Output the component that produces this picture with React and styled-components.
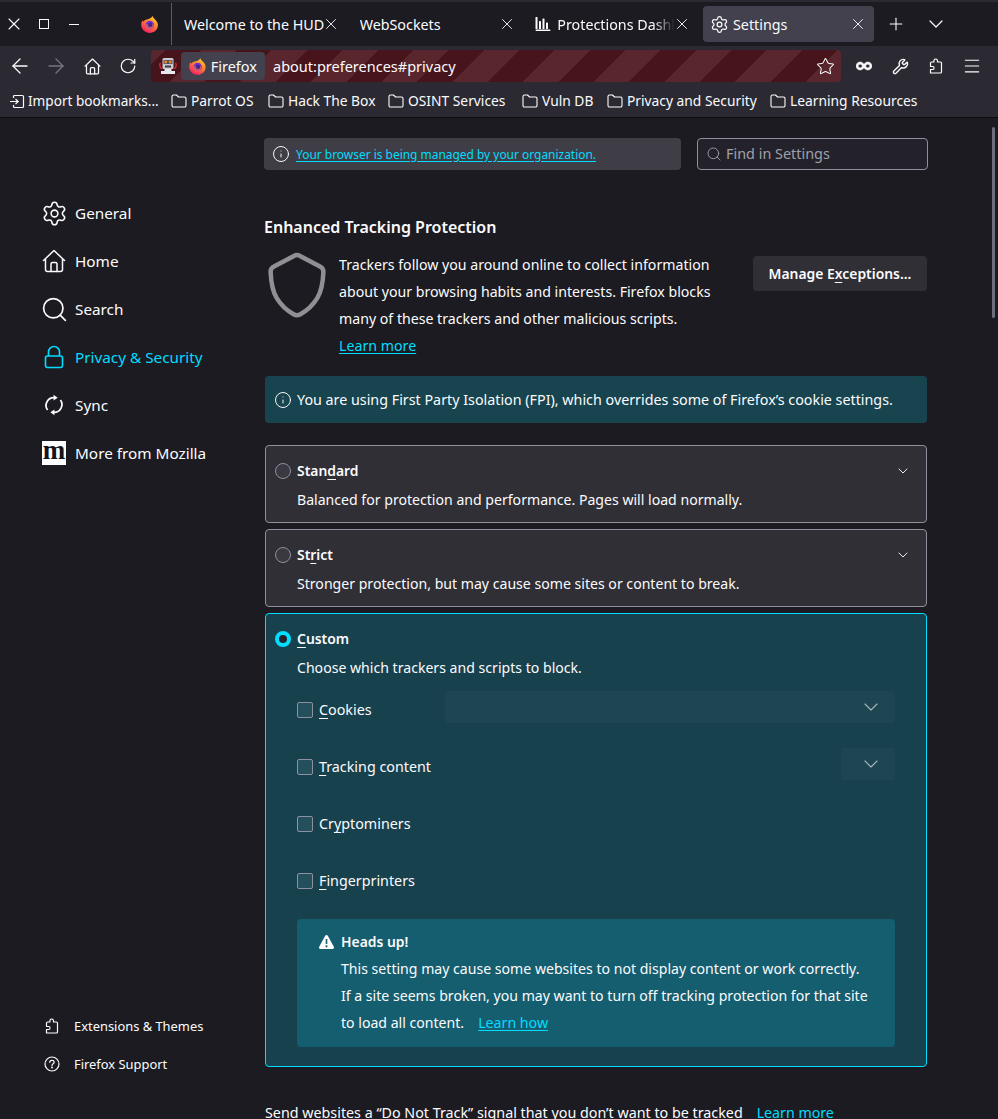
import React from 'react';
import styled, { createGlobalStyle } from 'styled-components';
import { X, Plus, ChevronDown, Star, Wrench, Menu, ArrowLeft, ArrowRight, RotateCw, Search as SearchIcon, Info, Settings } from 'lucide-react';

const colors = {
    frame: '#1c1b22',
    toolbar: '#2b2a33',
    card: '#302f36',
    active: '#42414d',
    text: '#fbfbfe',
    accent: '#00ddff',
    border: '#8f8f9d',
    custom: '#18414e',
    customField: '#1e4652',
    notice: '#155e6f',
};

const GlobalStyle = createGlobalStyle`
    html, body {
        margin: 0;
        background: ${colors.frame};
        overflow: hidden;
    }

    * {
        box-sizing: border-box;
    }

    body {
        font-family: 'Noto Sans', sans-serif;
        font-size: 14.3px;
        color: ${colors.text};
    }
`;

const Window = styled.div`
    display: flex;
    flex-direction: column;
    height: 1119px;
    overflow: hidden;
    position: relative;
`;

const TabBar = styled.div`
    align-items: center;
    background: ${colors.frame};
    border-top: 2px solid #2b2a33;
    display: flex;
    flex: 0 0 46px;
`;

const WindowButtons = styled.div`
    align-items: center;
    display: flex;
    flex: 0 0 140px;
    gap: 10px;
    padding-left: 4px;
    svg {
        display: block;
    }
`;

const PinnedTab = styled.div`
    align-items: center;
    border-right: 1px solid #5b5b66;
    display: flex;
    flex: 0 0 32px;
    height: 42px;
    padding-left: 1px;
`;

const TabStrip = styled.div`
    display: flex;
    gap: 4.67px;
    margin-left: 4px;
`;

const Tab = styled.div`
    align-items: center;
    background: ${p => (p.$active ? colors.active : 'transparent')};
    border-radius: 4px;
    display: flex;
    font-size: 14.3px;
    gap: 6px;
    height: 36px;
    padding: 0 7px 0 8px;
    width: 171px;
`;

const TabTitle = styled.span`
    flex: 1;
    mask-image: ${p => (p.$fade ? 'linear-gradient(to right, #000 80%, transparent 98%)' : 'none')};
    min-width: 0;
    overflow: hidden;
    white-space: nowrap;
`;

const TabClose = styled(X).attrs({ size: 18, strokeWidth: 1.2 })`
    flex: none;
    margin-left: -10px;
`;

const TabGear = styled(Settings).attrs({ size: 19, strokeWidth: 1.6 })`
    flex: none;
    margin: 0 -2px 0 -1px;
`;

const TabActions = styled.div`
    align-items: center;
    color: ${colors.text};
    display: flex;
    gap: 18px;
    margin-left: 12px;
    svg {
        display: block;
    }
`;

const NavBar = styled.div`
    align-items: center;
    background: ${colors.toolbar};
    display: flex;
    flex: 0 0 40px;
    padding: 0 16px 0 11px;
`;

const ToolButton = styled.div`
    align-items: center;
    color: ${p => (p.$disabled ? '#77767f' : colors.text)};
    display: flex;
    flex: 0 0 18px;
    justify-content: center;
    margin-right: ${p => p.$gap ?? 18}px;
    min-width: 0;
    svg {
        display: block;
        flex: none;
    }
`;

const UrlBar = styled.div`
    align-items: center;
    background: repeating-linear-gradient(-45deg, #58262c 0, #58262c 25px, #47141c 25px, #47141c 50px);
    border-radius: 4px;
    display: flex;
    flex: 0 0 690px;
    font-size: 14.5px;
    height: 32px;
    margin: 0 14px;
    padding: 0 6px 0 7px;
`;

const IdentityChip = styled.div`
    align-items: center;
    background: ${colors.active};
    border-radius: 4px;
    display: flex;
    gap: 5px;
    height: 28px;
    margin: 0 8px 0 3px;
    padding: 0 8px;
    width: 84px;
`;

const UrlText = styled.span`
    flex: 1;
    white-space: nowrap;
`;

const BookmarksBar = styled.div`
    align-items: center;
    background: ${colors.toolbar};
    border-bottom: 1px solid #0c0c0d;
    display: flex;
    flex: 0 0 32px;
    font-size: 13.8px;
    padding: 0 0 2px 9px;
`;

const Bookmark = styled.div`
    align-items: center;
    display: flex;
    flex: 0 0 ${p => p.$width}px;
    font-size: ${p => p.$size ?? 13.8}px;
    gap: ${p => p.$gap ?? 4}px;
    white-space: nowrap;
    svg {
        display: block;
        flex: none;
    }
`;

const Body = styled.div`
    display: flex;
    flex: 1;
    min-height: 0;
`;

const Sidebar = styled.nav`
    display: flex;
    flex: 0 0 264px;
    flex-direction: column;
    justify-content: space-between;
    padding: 71px 0 36px 42px;
`;

const NavItem = styled.div`
    align-items: center;
    color: ${p => (p.$active ? colors.accent : colors.text)};
    display: flex;
    font-size: 15.3px;
    gap: 9px;
    height: 48px;
`;

const NavIcon = styled.span`
    align-items: center;
    display: flex;
    flex: 0 0 24px;
    justify-content: center;
    min-width: 0;
    svg {
        display: block;
        flex: none;
    }
`;

const NavLabel = styled.span`
    padding-bottom: 1px;
`;

const FooterItem = styled.div`
    align-items: center;
    display: flex;
    font-size: 12.9px;
    gap: 14px;
    height: 38px;
    padding-left: 2px;
    svg {
        display: block;
        flex: none;
    }
`;

const MozillaMark = styled.span`
    align-items: center;
    background: #fff;
    color: #15141a;
    display: flex;
    flex: none;
    font-family: 'Liberation Serif', serif;
    font-size: 27px;
    font-weight: 700;
    height: 24px;
    justify-content: center;
    line-height: 1;
    padding-bottom: 6px;
    width: 24px;
`;

const Main = styled.main`
    flex: 0 0 664px;
    padding-top: 20px;
`;

const TopRow = styled.div`
    display: flex;
    gap: 16px;
    height: 32px;
`;

const ManagedBar = styled.div`
    align-items: center;
    background: #3f3e46;
    border-radius: 4px;
    display: flex;
    flex: 0 0 417px;
    gap: 6px;
    padding-left: 8px;
    svg {
        display: block;
    }
`;

const TextLink = styled.a`
    color: ${colors.accent};
    font-size: ${p => p.$size ?? 14.2}px;
    text-decoration: underline;
    text-underline-offset: 2px;
`;

const SearchBox = styled.div`
    align-items: center;
    background: #23222b;
    border: 1px solid ${colors.border};
    border-radius: 4px;
    color: #a0a0a9;
    display: flex;
    flex: 1;
    font-size: 14.4px;
    gap: 4px;
    padding: 0 0 1px 8px;
    svg {
        display: block;
    }
`;

const Heading = styled.h2`
    font-size: 16px;
    font-weight: 600;
    line-height: 24px;
    margin: 45px 0 0;
`;

const IntroRow = styled.div`
    display: flex;
    margin-top: 12px;
    padding-right: 1px;
`;

const ShieldSlot = styled.div`
    flex: 0 0 75px;
    padding: 1px 0 0 3px;
`;

const IntroText = styled.p`
    flex: 0 0 400px;
    font-size: 14.15px;
    line-height: 27px;
    margin: 0;
`;

const PlainButton = styled.div`
    align-items: center;
    background: ${colors.card};
    border-radius: 4px;
    display: flex;
    font-size: 13.9px;
    font-weight: 600;
    height: 35px;
    justify-content: center;
    margin: 5px 0 0 auto;
    width: 174px;
`;

const Notice = styled.div`
    align-items: center;
    background: #17444f;
    border-radius: 4px;
    display: flex;
    gap: 5px;
    height: 47px;
    margin: 17px 1px 0;
    padding-left: 9px;
    svg {
        display: block;
    }
`;

const Cards = styled.div`
    display: flex;
    flex-direction: column;
    gap: 6px;
    margin: 22px 1px 0;
`;

const Card = styled.section`
    background: ${p => (p.$selected ? colors.custom : colors.card)};
    border: 1px solid ${p => (p.$selected ? colors.accent : colors.border)};
    border-radius: 4px;
    height: ${p => (p.$selected ? '454px' : '78px')};
    padding: 11px 31px 0 9px;
`;

const CardHead = styled.div`
    align-items: center;
    display: flex;
    font-size: 13.9px;
    font-weight: 600;
    gap: 6px;
    height: 27px;
    svg {
        display: block;
        margin-left: auto;
        margin-right: -16px;
    }
`;

const CardTitle = styled.span`
    padding-bottom: 1px;
`;

const Radio = styled.span`
    background: ${p => (p.$checked ? '#23222b' : '#3a3942')};
    border: ${p => (p.$checked ? `4px solid ${colors.accent}` : `1px solid ${colors.border}`)};
    border-radius: 50%;
    flex: none;
    height: 16px;
    width: 16px;
`;

const CardText = styled.p`
    font-size: 14.1px;
    line-height: 27px;
    margin: 2px 0 0 22px;
`;

const Key = styled.u`
    text-decoration-thickness: 1px;
    text-underline-offset: 3px;
`;

const OptionRow = styled.div`
    align-items: center;
    display: flex;
    height: 57px;
    margin-left: 22px;
`;

const CheckBox = styled.span`
    background: #23505c;
    border: 1px solid ${colors.border};
    border-radius: 2px;
    flex: none;
    height: 16px;
    margin-right: 6px;
    width: 16px;
`;

const OptionLabel = styled.span`
    flex: 0 0 126px;
`;

const SelectBox = styled.div`
    align-items: center;
    background: ${colors.customField};
    border-radius: 4px;
    color: #a9b8be;
    display: flex;
    height: 32px;
    justify-content: flex-end;
    margin-left: ${p => (p.$small ? 'auto' : 0)};
    margin-top: -6px;
    padding-right: 12px;
    width: ${p => (p.$small ? '54px' : '450px')};
`;

const Warning = styled.div`
    background: ${colors.notice};
    border-radius: 4px;
    height: 128px;
    margin: 10px 0 0 22px;
    padding: 9px 22px 0 22px;
`;

const WarningTitle = styled.div`
    align-items: center;
    display: flex;
    font-size: 13.9px;
    font-weight: 600;
    gap: 7px;
    height: 27px;
    svg {
        display: block;
    }
`;

const WarningText = styled.p`
    font-size: 14.1px;
    line-height: 27px;
    margin: 0 0 0 22px;
`;

const LinkGap = styled.span`
    margin-left: 14px;
`;

const DntLine = styled.p`
    margin: 36px 0 0 1px;
    white-space: nowrap;
`;

const OverlayScrollbar = styled.div`
    background: #6b6e7c;
    border-radius: 2px;
    height: 191px;
    position: absolute;
    right: 3px;
    top: 127px;
    width: 3px;
`;

const FirefoxLogo = () => (
    <svg width="17" height="17" viewBox="0 0 16 16">
        <defs>
            <linearGradient id="fx" x1="0.8" y1="0" x2="0.25" y2="1">
                <stop offset="0" stopColor="#ffd22e" />
                <stop offset="0.4" stopColor="#ff8a2e" />
                <stop offset="1" stopColor="#f5156c" />
            </linearGradient>
        </defs>
        <path d="M11 0c.3 1.700 1.400 2.300 2.500 3.500 1.700 1.700 2.500 3.500 2.400 5.500-.2 4-3.500 7-7.700 7C3.800 16 .2 12.500.2 8.300c0-1.700.5-3.200 1.400-4.400l.5 1.500c1-1.500 2.600-2.300 4.500-2.400C8.100 2.500 9.800 1.700 11 0z" fill="url(#fx)" />
        <circle cx="8.300" cy="8.500" r="4.100" fill="#7b2fd0" />
        <path d="M4.200 7.600c1.700.3 3.100.1 4.400-1 1 1.200 3 .6 3.600 2-.3 2.500-2 4.300-4.300 4.300-2 0-3.500-1.200-3.900-3.100z" fill="#ff7139" opacity="0.6" />
        <circle cx="8.600" cy="8.200" r="2.100" fill="#45278d" />
    </svg>
);

const RobotIcon = () => (
    <svg width="20" height="20" viewBox="0 0 20 20" fill="none">
        <path d="M2.500 7c-1.500 2-.5 5 1.500 6M17.500 7c1.500 2 .5 5-1.500 6" stroke="#d92d35" strokeWidth="1.300" />
        <rect x="4.500" y="2" width="11" height="11" rx="1.500" fill="#c9c9cf" />
        <rect x="5.500" y="4" width="9" height="4" fill="#55545c" />
        <circle cx="7.700" cy="6" r="1.400" fill="#f08a24" />
        <circle cx="12.300" cy="6" r="1.400" fill="#f08a24" />
        <rect x="7" y="9.500" width="6" height="2" fill="#3a3942" />
        <path d="M6.500 13h7v2h3.500v3H3v-3h3.500z" fill="#e8e8ee" />
    </svg>
);

const HomeIcon = ({ size = 17, sw = 1.8 }) => (
    <svg width={size} height={size} viewBox="0 0 24 24" fill="none" stroke="currentColor" strokeWidth={sw} strokeLinejoin="round" strokeLinecap="round">
        <path d="M1.500 11.500 12 1.500l10.500 10M3.500 10v11a2 2 0 0 0 2 1.500h13a2 2 0 0 0 2-1.500V10" />
        <path d="M9 22.500V15a1.500 1.500 0 0 1 1.500-1.500h3A1.500 1.500 0 0 1 15 15v7.500" />
    </svg>
);

const LockIcon = () => (
    <svg width="24" height="24" viewBox="0 0 24 24" fill="none" stroke="currentColor" strokeWidth="1.600">
        <rect x="3.500" y="11" width="17" height="11.500" rx="2" />
        <path d="M6.500 11V7a5.500 5.500 0 0 1 11 0v4" />
    </svg>
);

const SyncIcon = () => (
    <svg width="22" height="22" viewBox="0 0 24 24" fill="none" stroke="currentColor" strokeWidth="1.900">
        <path d="M5 17.500A8.500 8.500 0 0 1 12.500 4" />
        <path d="M19 6.500A8.500 8.500 0 0 1 11.500 20" />
        <path d="M11.500.8 16 4l-4.500 3.200z" fill="currentColor" stroke="none" />
        <path d="M12.500 23.200 8 20l4.500-3.200z" fill="currentColor" stroke="none" />
    </svg>
);

const PuzzleIcon = ({ size = 16 }) => (
    <svg width={size} height={size} viewBox="0 0 16 16" fill="none" stroke="currentColor" strokeWidth="1.200" strokeLinejoin="round">
        <path d="M6 4C5.500 2.500 6.200 1 7.700 1s2.200 1.500 1.700 3h3.100a1 1 0 0 1 1 1v9a1 1 0 0 1-1 1h-10v-3.500H5c1.300 0 1.300-3 0-3H2.500V5a1 1 0 0 1 1-1z" />
    </svg>
);

const FolderIcon = () => (
    <svg width="16" height="16" viewBox="0 0 16 16" fill="none" stroke="currentColor" strokeWidth="1.100" strokeLinejoin="round">
        <path d="M1 3.500A1.500 1.500 0 0 1 2.500 2h3l2 2h6A1.500 1.500 0 0 1 15 5.500v7a1.500 1.500 0 0 1-1.500 1.500h-11A1.500 1.500 0 0 1 1 12.500z" />
    </svg>
);

const ImportIcon = () => (
    <svg width="16" height="16" viewBox="0 0 16 16" fill="none" stroke="currentColor" strokeWidth="1.200">
        <path d="M1 8.500h8M6.500 6l2.700 2.500-2.700 2.500" />
        <path d="M4.500 5V3.500a1 1 0 0 1 1-1h8a1 1 0 0 1 1 1v10a1 1 0 0 1-1 1h-8a1 1 0 0 1-1-1V12" />
    </svg>
);

const ChartGlyph = styled.svg`
    flex: none;
`;

const ChartIcon = () => (
    <ChartGlyph width="16" height="16" viewBox="0 0 16 16" fill="currentColor">
        <rect x=".5" y="1" width="2" height="12" rx=".5" />
        <rect x="4" y="5" width="2" height="8" rx=".5" />
        <rect x="7.500" y="2.500" width="2" height="10.500" rx=".5" />
        <rect x="11" y="6.500" width="2" height="6.500" rx=".5" />
        <rect x=".5" y="13.500" width="15" height="1.500" rx=".7" />
    </ChartGlyph>
);

const MaskIcon = () => (
    <svg width="16" height="16" viewBox="0 0 16 16">
        <path fillRule="evenodd" stroke="#fbfbfe" strokeWidth=".5" d="M4.200 4C1.800 4 0 5.800 0 8s1.800 4 4.200 4c1.900 0 3-1.200 3.800-2.200.8 1 1.900 2.200 3.800 2.200C14.200 12 16 10.200 16 8s-1.800-4-4.200-4C9.900 4 8.800 5.200 8 6.200 7.200 5.200 6.100 4 4.200 4zm0 2.200c1 0 1.700.9 2.300 1.800-.6.900-1.300 1.800-2.300 1.800C3.100 9.800 2.200 9 2.200 8s.9-1.800 2-1.800zm7.600 0c1.100 0 2 .8 2 1.800s-.9 1.800-2 1.800c-1 0-1.700-.9-2.300-1.800.6-.9 1.300-1.800 2.300-1.800z" fill="#fbfbfe" />
    </svg>
);

const ShieldIcon = () => (
    <svg width="60" height="66" viewBox="0 0 60 66" fill="none" stroke="#8f8f94" strokeWidth="4.500" strokeLinejoin="round">
        <path d="M30 3c1 0 2 .3 3 .9l20 10.600c2 1 3.500 3 3.400 5.400-.4 9.400-1.200 18-6 26-4 6.600-10 12.500-17 16.400-2.200 1.200-4.600 1.200-6.800 0-7-3.900-13-9.800-17-16.400-4.800-8-5.600-16.600-6-26C3.500 17.500 5 15.500 7 14.500L27 3.900c1-.6 2-.9 3-.9z" />
    </svg>
);

const WarningIcon = () => (
    <svg width="15" height="14" viewBox="0 0 15 14">
        <path fillRule="evenodd" d="M7.500 0c.5 0 1 .3 1.300.8l6 11c.5 1-.2 2.200-1.300 2.200h-12c-1.100 0-1.800-1.200-1.300-2.200l6-11C6.500.3 7 0 7.500 0zM6.700 4v5h1.600V4zm.8 6.200a1.100 1.100 0 1 0 0 2.200 1.100 1.100 0 0 0 0-2.200z" fill="#fff" />
    </svg>
);

const HelpIcon = () => (
    <svg width="16" height="16" viewBox="0 0 16 16" fill="none" stroke="currentColor" strokeWidth="1.200" strokeLinecap="round">
        <circle cx="8" cy="8" r="7" />
        <path d="M5.800 6.300c0-1.300 1-2 2.200-2s2.200.8 2.200 1.900c0 1.600-2.200 1.600-2.200 3.200" />
        <circle cx="8" cy="11.600" r=".4" />
    </svg>
);

const bookmarks = [
    { name: 'Parrot OS', width: 97 },
    { name: 'Hack The Box', width: 120 },
    { name: 'OSINT Services', width: 134 },
    { name: 'Vuln DB', width: 85 },
    { name: 'Privacy and Security', width: 163 },
    { name: 'Learning Resources', width: 160 },
];

const navItems = [
    { name: 'General', icon: <Settings size={27} strokeWidth={1.4} /> },
    { name: 'Home', icon: <HomeIcon size={24} sw={1.5} /> },
    { name: 'Search', icon: <SearchIcon size={29} strokeWidth={1.4} /> },
    { name: 'Privacy & Security', icon: <LockIcon />, active: true },
    { name: 'Sync', icon: <SyncIcon /> },
    { name: 'More from Mozilla', icon: <MozillaMark>m</MozillaMark> },
];

const App = () => (
    <Window>
        <GlobalStyle />
        <TabBar>
            <WindowButtons>
                <X size={20} strokeWidth={1.3} />
                <svg width="20" height="20" viewBox="0 0 20 20" fill="none" stroke="currentColor">
                    <rect x="5.500" y="5.500" width="9" height="9" />
                </svg>
                <svg width="20" height="20" viewBox="0 0 20 20" stroke="currentColor">
                    <path d="M5 10.500h10" />
                </svg>
            </WindowButtons>
            <PinnedTab>
                <FirefoxLogo />
            </PinnedTab>
            <TabStrip>
                <Tab>
                    <TabTitle>Welcome to the HUD</TabTitle>
                    <TabClose />
                </Tab>
                <Tab>
                    <TabTitle>WebSockets</TabTitle>
                    <TabClose />
                </Tab>
                <Tab>
                    <ChartIcon />
                    <TabTitle $fade>Protections Dashboard</TabTitle>
                    <TabClose />
                </Tab>
                <Tab $active>
                    <TabGear />
                    <TabTitle>Settings</TabTitle>
                    <TabClose />
                </Tab>
            </TabStrip>
            <TabActions>
                <Plus size={20} strokeWidth={1.3} />
                <ChevronDown size={24} strokeWidth={1.2} />
            </TabActions>
        </TabBar>
        <NavBar>
            <ToolButton><ArrowLeft size={24} strokeWidth={1.3} /></ToolButton>
            <ToolButton $disabled><ArrowRight size={24} strokeWidth={1.3} /></ToolButton>
            <ToolButton><HomeIcon /></ToolButton>
            <ToolButton $gap={0}><RotateCw size={18} strokeWidth={1.6} /></ToolButton>
            <UrlBar>
                <RobotIcon />
                <IdentityChip>
                    <FirefoxLogo />
                    Firefox
                </IdentityChip>
                <UrlText>about:preferences#privacy</UrlText>
                <Star size={19} strokeWidth={1.3} />
            </UrlBar>
            <ToolButton><MaskIcon /></ToolButton>
            <ToolButton><Wrench size={17} strokeWidth={2} /></ToolButton>
            <ToolButton><PuzzleIcon /></ToolButton>
            <ToolButton $gap={0}><Menu size={20} strokeWidth={1.3} /></ToolButton>
        </NavBar>
        <BookmarksBar>
            <Bookmark $width={162} $size={13.6} $gap={3}>
                <ImportIcon />
                Import bookmarks...
            </Bookmark>
            {bookmarks.map(b => (
                <Bookmark key={b.name} $width={b.width}>
                    <FolderIcon />
                    {b.name}
                </Bookmark>
            ))}
        </BookmarksBar>
        <Body>
            <Sidebar>
                <div>
                    {navItems.map(item => (
                        <NavItem key={item.name} $active={item.active}>
                            <NavIcon>{item.icon}</NavIcon>
                            <NavLabel>{item.name}</NavLabel>
                        </NavItem>
                    ))}
                </div>
                <div>
                    <FooterItem>
                        <PuzzleIcon />
                        Extensions &amp; Themes
                    </FooterItem>
                    <FooterItem>
                        <HelpIcon />
                        Firefox Support
                    </FooterItem>
                </div>
            </Sidebar>
            <Main>
                <TopRow>
                    <ManagedBar>
                        <Info size={18} strokeWidth={1.3} />
                        <TextLink $size={11.95}>Your browser is being managed by your organization.</TextLink>
                    </ManagedBar>
                    <SearchBox>
                        <SearchIcon size={16} strokeWidth={1.4} />
                        Find in Settings
                    </SearchBox>
                </TopRow>
                <Heading>Enhanced Tracking Protection</Heading>
                <IntroRow>
                    <ShieldSlot>
                        <ShieldIcon />
                    </ShieldSlot>
                    <IntroText>
                        Trackers follow you around online to collect information
                        about your browsing habits and interests. Firefox blocks
                        many of these trackers and other malicious scripts.
                        <br />
                        <TextLink>Learn more</TextLink>
                    </IntroText>
                    <PlainButton>
                        <span>Manage E<Key>x</Key>ceptions...</span>
                    </PlainButton>
                </IntroRow>
                <Notice>
                    <Info size={18} strokeWidth={1.3} />
                    You are using First Party Isolation (FPI), which overrides some of Firefox’s cookie settings.
                </Notice>
                <Cards>
                    <Card>
                        <CardHead>
                            <Radio />
                            <CardTitle>Stan<Key>d</Key>ard</CardTitle>
                            <ChevronDown size={16} strokeWidth={1.4} />
                        </CardHead>
                        <CardText>Balanced for protection and performance. Pages will load normally.</CardText>
                    </Card>
                    <Card>
                        <CardHead>
                            <Radio />
                            <CardTitle>St<Key>r</Key>ict</CardTitle>
                            <ChevronDown size={16} strokeWidth={1.4} />
                        </CardHead>
                        <CardText>Stronger protection, but may cause some sites or content to break.</CardText>
                    </Card>
                    <Card $selected>
                        <CardHead>
                            <Radio $checked />
                            <CardTitle><Key>C</Key>ustom</CardTitle>
                        </CardHead>
                        <CardText>Choose which trackers and scripts to block.</CardText>
                        <div>
                            <OptionRow>
                                <CheckBox />
                                <OptionLabel><Key>C</Key>ookies</OptionLabel>
                                <SelectBox><ChevronDown size={24} strokeWidth={1.1} /></SelectBox>
                            </OptionRow>
                            <OptionRow>
                                <CheckBox />
                                <OptionLabel><Key>T</Key>racking content</OptionLabel>
                                <SelectBox $small><ChevronDown size={24} strokeWidth={1.1} /></SelectBox>
                            </OptionRow>
                            <OptionRow>
                                <CheckBox />
                                <OptionLabel>Cr<Key>y</Key>ptominers</OptionLabel>
                            </OptionRow>
                            <OptionRow>
                                <CheckBox />
                                <OptionLabel><Key>F</Key>ingerprinters</OptionLabel>
                            </OptionRow>
                        </div>
                        <Warning>
                            <WarningTitle>
                                <WarningIcon />
                                Heads up!
                            </WarningTitle>
                            <WarningText>
                                This setting may cause some websites to not display content or work correctly.
                                <br />
                                If a site seems broken, you may want to turn off tracking protection for that site
                                <br />
                                to load all content.
                                <LinkGap><TextLink>Learn how</TextLink></LinkGap>
                            </WarningText>
                        </Warning>
                    </Card>
                </Cards>
                <DntLine>
                    Send websites a “Do Not Track” signal that you don’t want to be tracked
                    <LinkGap><TextLink>Learn more</TextLink></LinkGap>
                </DntLine>
            </Main>
        </Body>
        <OverlayScrollbar />
    </Window>
);

export default App;
